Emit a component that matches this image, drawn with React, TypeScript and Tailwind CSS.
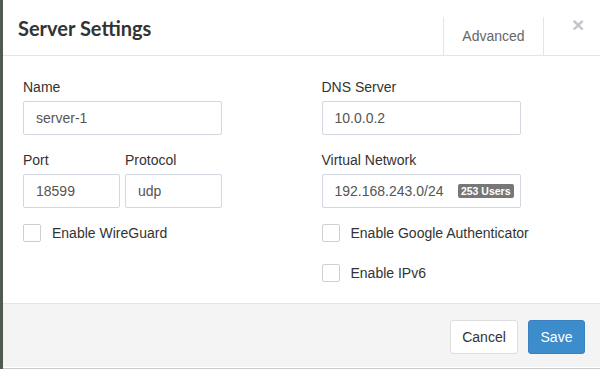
import React from 'react';

const sans = { fontFamily: '"Liberation Sans", Arial, sans-serif' };

const Field: React.FC<{ label: string; value: string; badge?: string; className?: string }> = ({
  label,
  value,
  badge,
  className = 'w-[199px]',
}) => (
  <div className={className}>
    <div className="h-[20px] mb-[4px] text-[14px] leading-[20px] text-[#333]">{label}</div>
    <div className="h-[34px] flex items-center justify-between border border-[#d2d6de] rounded-[2px] bg-white pl-[12px] pr-[6px] text-[14px] text-[#555]">
      <span>{value}</span>
      {badge && (
        <span className="h-[14px] px-[3px] flex items-center rounded-[2px] bg-[#777] text-white text-[10.5px] font-bold leading-none">
          {badge}
        </span>
      )}
    </div>
  </div>
);

const Check: React.FC<{ label: string }> = ({ label }) => (
  <div className="flex items-center h-[18px]">
    <span className="w-[18px] h-[18px] border border-[#cfcfcf] rounded-[2px] bg-white" />
    <span className="ml-[11px] text-[14px] text-[#333]">{label}</span>
  </div>
);

export default function App() {
  return (
    <div className="w-[600px] h-[369px] flex bg-[#c9c9c9] overflow-hidden" style={sans}>
      <div className="w-[3px] h-full bg-[#4f5a50]" />
      <div className="w-[597px] h-[368px] bg-white flex flex-col border-b border-white">
        {/* header */}
        <div className="h-[56px] flex border-b border-[#e5e5e5]">
          <div
            className="flex-1 flex items-center pl-[15px] text-[20px] font-bold text-[#333]"
            style={{ fontFamily: 'Lato, "Open Sans", sans-serif' }}
          >
            Server Settings
          </div>
          <div className="self-end h-[38px] w-[101px] flex items-center justify-center border-x border-[#e5e5e5] text-[14px] text-[#666]">
            Advanced
          </div>
          <span className="ml-[28px] mr-[16px] mt-[14px] w-[12px] text-center text-[21px] font-bold leading-[21px] text-[#c4c4c4]">
            ×
          </span>
        </div>

        {/* body */}
        <div className="grid grid-cols-2 pt-[21px] pb-[21px]">
          <div className="pl-[20px]">
            <Field label="Name" value="server-1" />
            <div className="flex gap-[5px] mt-[15px]">
              <Field label="Port" value="18599" className="w-[97px]" />
              <Field label="Protocol" value="udp" className="w-[97px]" />
            </div>
            <div className="mt-[16px]">
              <Check label="Enable WireGuard" />
            </div>
          </div>
          <div className="pl-[20px]">
            <Field label="DNS Server" value="10.0.0.2" />
            <div className="mt-[15px]">
              <Field label="Virtual Network" value="192.168.243.0/24" badge="253 Users" />
            </div>
            <div className="mt-[16px] flex flex-col gap-[22px]">
              <Check label="Enable Google Authenticator" />
              <Check label="Enable IPv6" />
            </div>
          </div>
        </div>

        {/* footer */}
        <div className="flex-1 border-t border-[#e5e5e5] bg-[#f4f4f4] flex justify-end items-start gap-[10px] pt-[16px] pr-[15px]">
          <button className="h-[34px] w-[68px] border border-[#ddd] rounded-[3px] bg-white text-[14px] text-[#333]">
            Cancel
          </button>
          <button className="h-[34px] w-[57px] border border-[#3a82bf] rounded-[3px] bg-[#3d8ccc] text-[14px] text-white">
            Save
          </button>
        </div>
      </div>
    </div>
  );
}
